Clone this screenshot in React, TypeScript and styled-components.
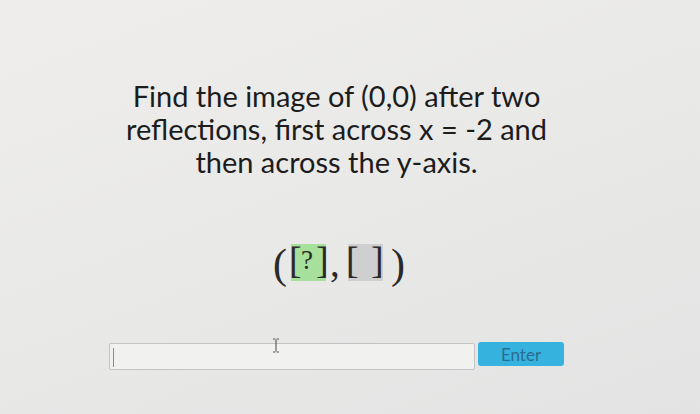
import React from "react";
import styled, { createGlobalStyle } from "styled-components";

const Global = createGlobalStyle`
  html, body { margin: 0; padding: 0; }
  body { width: 700px; height: 414px; overflow: hidden; }
`;

const Page = styled.div`
  position: relative;
  width: 700px;
  height: 414px;
  box-sizing: border-box;
  background: linear-gradient(160deg, #eeedec 0%, #e9e9e8 50%, #e3e3e3 100%);
  display: flex;
  flex-direction: column;
  align-items: center;
  padding-top: 79px;
  padding-right: 27px;
`;

const Question = styled.p`
  margin: 0;
  width: 460px;
  text-align: center;
  font-family: Lato, "Open Sans", sans-serif;
  font-size: 29px;
  line-height: 33px;
  color: #1c1c1c;
`;

const Formula = styled.div`
  margin-top: 66px;
  margin-left: 5px;
  display: flex;
  align-items: flex-start;
  height: 37px;
  font-family: "Liberation Serif", "Times New Roman", serif;
  line-height: 37px;
  color: #2a2a2a;
`;

const Paren = styled.span<{ $side: "left" | "right" }>`
  display: inline-block;
  width: 14px;
  font-size: 42px;
  margin-top: 2px;
  margin-right: ${(p) => (p.$side === "left" ? "4px" : "0")};
  margin-left: ${(p) => (p.$side === "right" ? "8px" : "0")};
  white-space: nowrap;
`;

const Slot = styled.span<{ $tone: "green" | "gray" }>`
  display: inline-flex;
  align-items: flex-start;
  width: 35px;
  height: 37px;
  box-sizing: border-box;
  padding: 0;
  background: ${(p) => (p.$tone === "green" ? "#a6e09a" : "#cfcfd0")};
`;

const Bracket = styled.span<{ $side: "open" | "close"; $inset?: number }>`
  display: inline-block;
  font-size: 38px;
  white-space: nowrap;
  margin-top: -2px;
  width: ${(p) => (p.$side === "open" ? "11px" : "10px")};
  margin-left: ${(p) => (p.$side === "open" ? "-2px" : "auto")};
  margin-right: ${(p) => (p.$side === "close" ? `${p.$inset ?? 0}px` : "0")};
`;

const Mark = styled.span`
  display: inline-block;
  width: 12px;
  margin-left: 1px;
  margin-top: -2px;
  font-size: 27px;
  white-space: nowrap;
`;

const Comma = styled.span`
  display: inline-block;
  width: 18px;
  margin-left: 4px;
  font-size: 39px;
  white-space: nowrap;
`;

const AnswerRow = styled.div`
  margin-top: 62px;
  display: flex;
  align-items: flex-start;
  gap: 3px;
`;

const Input = styled.div`
  position: relative;
  width: 366px;
  height: 27px;
  box-sizing: border-box;
  background: #f1f1f0;
  border: 1px solid #c4c4c4;
  border-radius: 2px;
`;

const Caret = styled.span`
  position: absolute;
  left: 3px;
  top: 4px;
  width: 1px;
  height: 19px;
  background: #8a8a8a;
`;

const EnterButton = styled.button`
  width: 86px;
  height: 24px;
  margin-top: -1px;
  border: none;
  border-radius: 3px;
  background: #36b2df;
  color: #2b6c92;
  font-family: Lato, "Open Sans", sans-serif;
  font-size: 17px;
  padding: 0;
  cursor: pointer;
`;

const MouseCursor = styled.svg`
  position: absolute;
  left: 272px;
  top: 338px;
`;

export default function App() {
  return (
    <>
      <Global />
      <Page>
        <Question>
          Find the image of (0,0) after two
          <br />
          reflections, first across x = -2 and
          <br />
          then across the y-axis.
        </Question>
        <Formula>
          <Paren $side="left">(</Paren>
          <Slot $tone="green">
            <Bracket $side="open">[</Bracket>
            <Mark>?</Mark>
            <Bracket $side="close">]</Bracket>
          </Slot>
          <Comma>,</Comma>
          <Slot $tone="gray">
            <Bracket $side="open">[</Bracket>
            <Bracket $side="close" $inset={2}>]</Bracket>
          </Slot>
          <Paren $side="right">)</Paren>
        </Formula>
        <AnswerRow>
          <Input>
            <Caret />
          </Input>
          <EnterButton>Enter</EnterButton>
        </AnswerRow>
        <MouseCursor width="8" height="15" viewBox="0 0 8 15">
          <path d="M1 1h2.3M4.7 1H7M4 1.5v12M1 14h2.3M4.7 14H7" stroke="#555" strokeWidth="1.1" fill="none" />
        </MouseCursor>
      </Page>
    </>
  );
}
